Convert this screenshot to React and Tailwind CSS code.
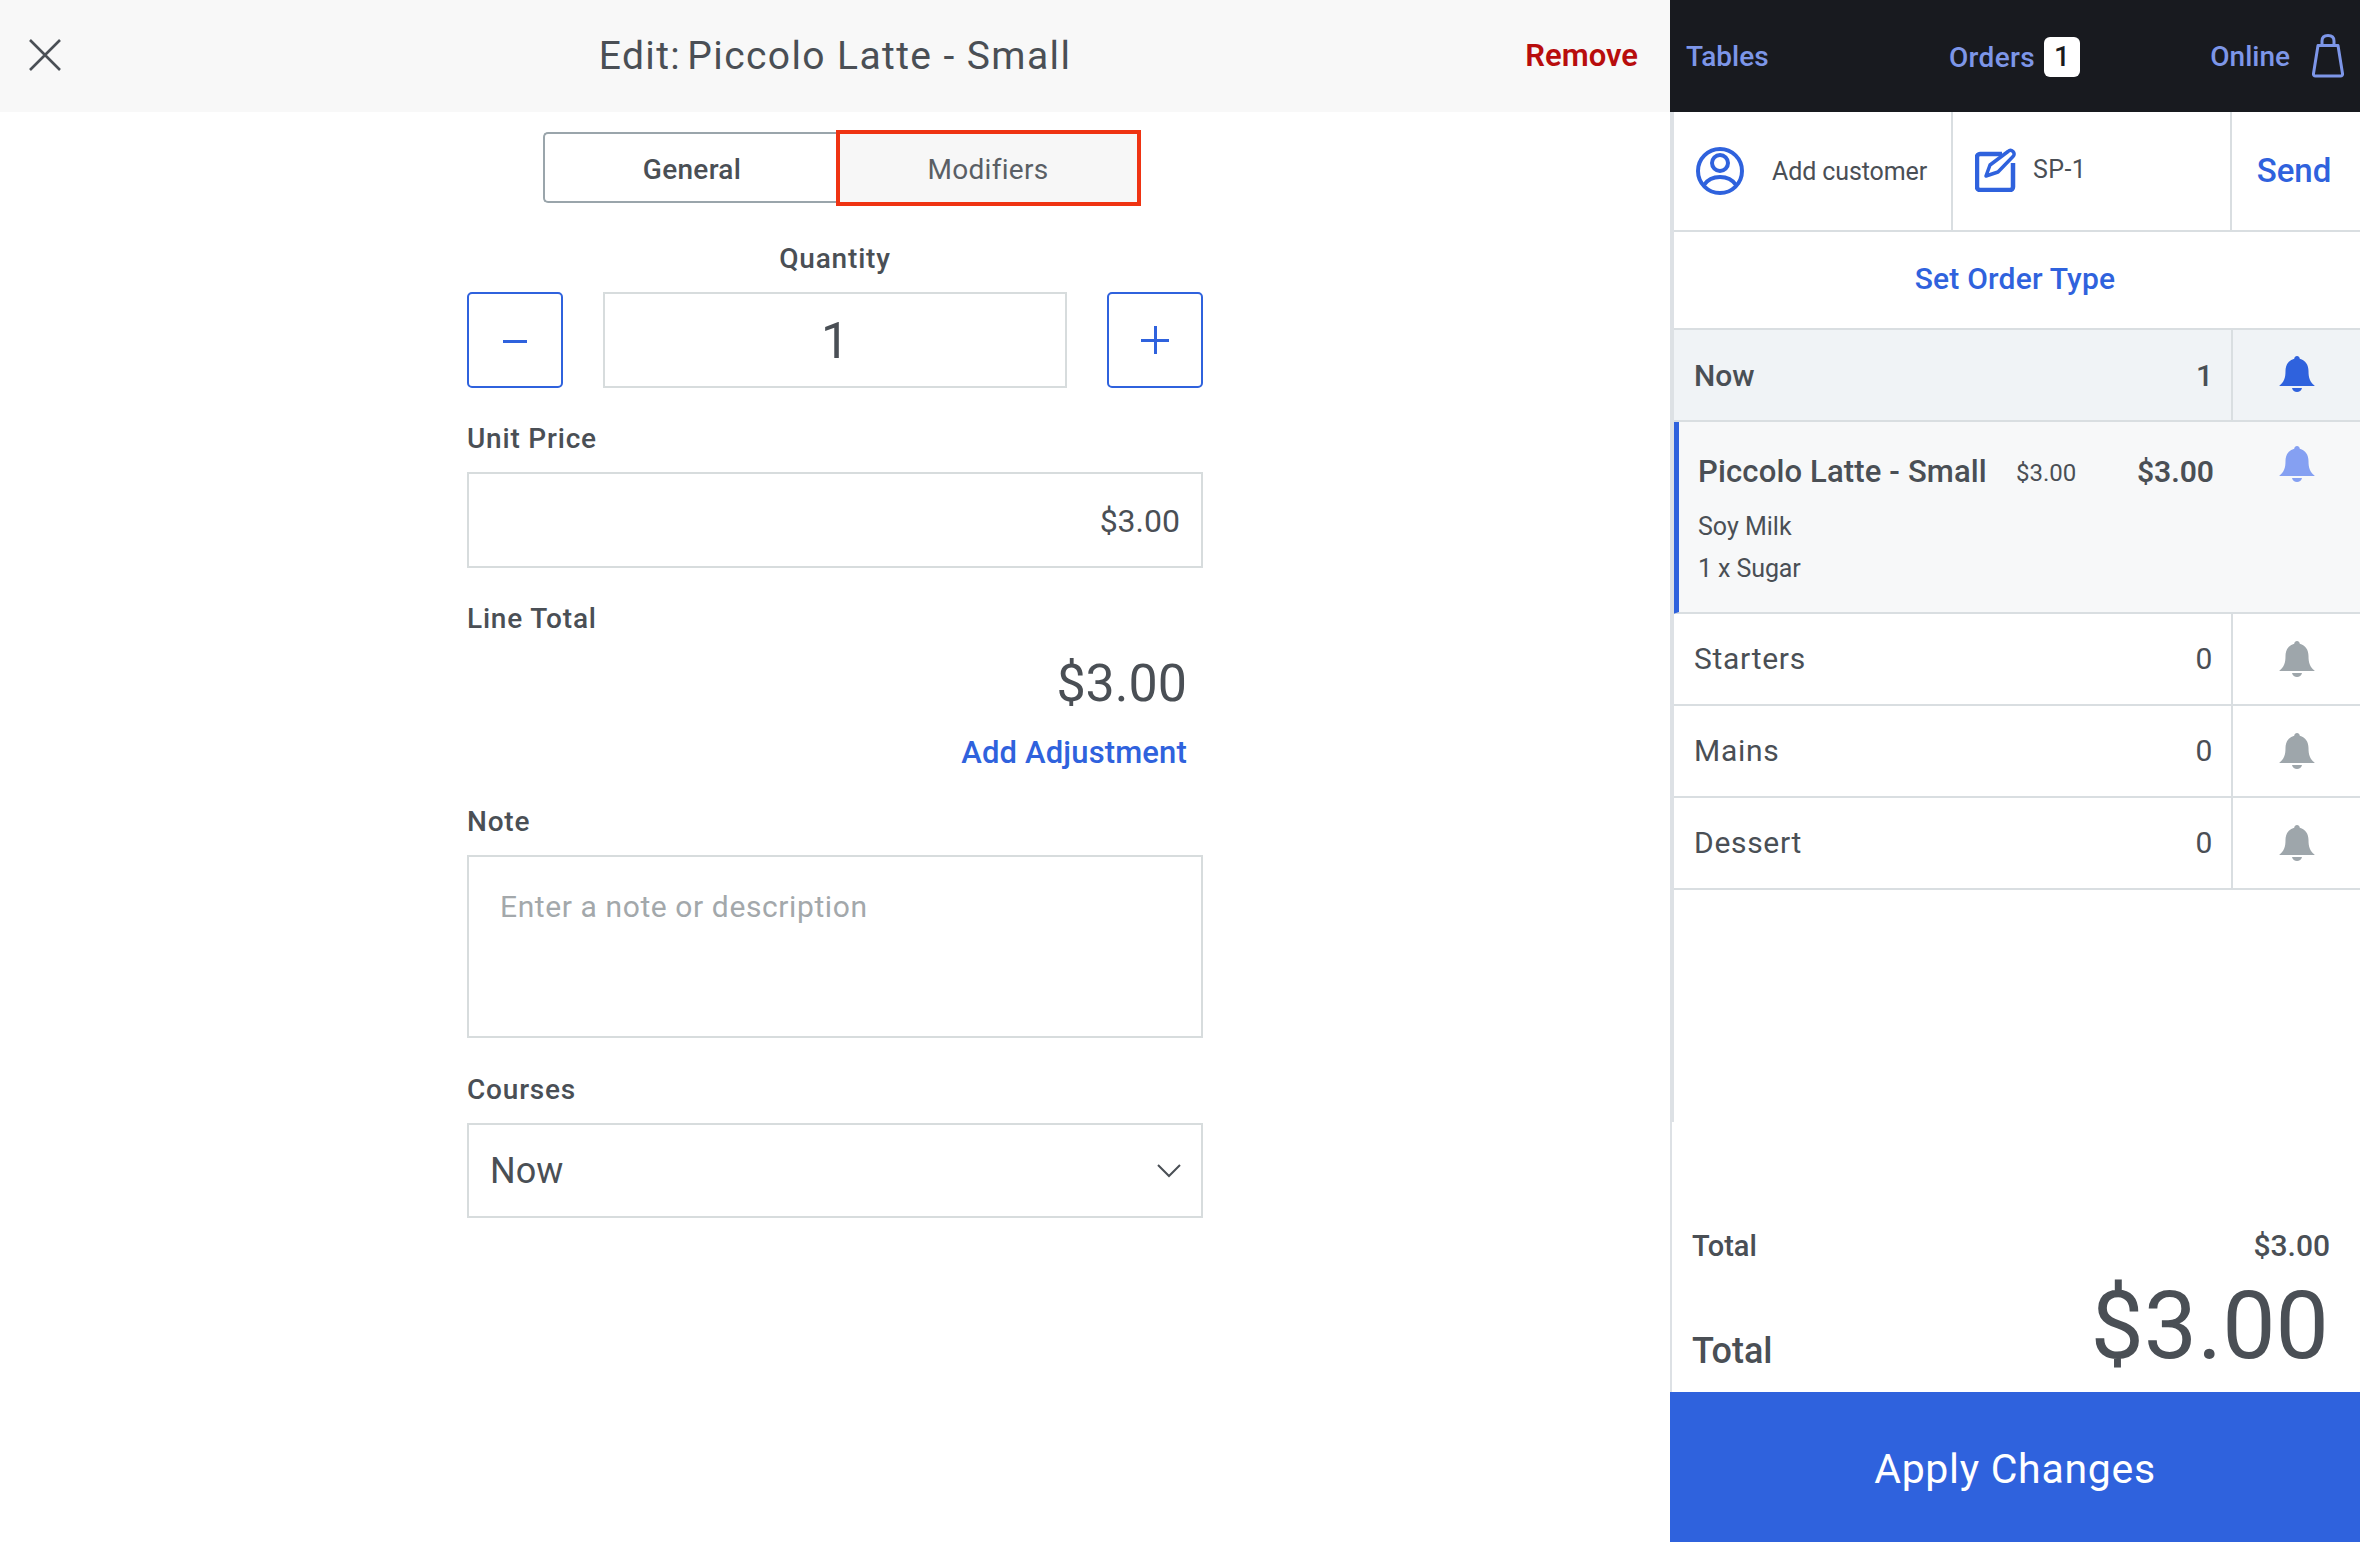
const font = { fontFamily: 'Roboto, sans-serif' }

function Bell({ className }) {
  return (
    <svg viewBox="0 0 36 36" className={className} fill="currentColor">
      <path d="M18 0c1.500 0 2.500 1 2.800 2.800C26.500 4.200 29.500 9 29.500 15c0 7 1.500 11 6 14.500V30H.5v-.5c4.500-3.500 6-7.500 6-14.500 0-6 3-10.800 8.700-12.200C15.500 1 16.500 0 18 0z" />
      <path d="M13 32h10c-.6 2.500-2.600 4-5 4s-4.400-1.500-5-4z" />
    </svg>
  )
}

function CourseRow({ name, count }) {
  return (
    <div className="flex h-[92px] border-b-2 border-[#d9dee1]">
      <div className="flex flex-1 items-center justify-between border-r-2 border-[#d9dee1] pb-[2px] pl-[21px] pr-[18px] text-[30px] tracking-[0.7px] text-[#4a4f55]">
        <span>{name}</span>
        <span>{count}</span>
      </div>
      <div className="flex w-[127px] items-center justify-center pb-[1px] text-[#9ea6ab]">
        <Bell className="h-[36px] w-[36px]" />
      </div>
    </div>
  )
}

function Label({ children }) {
  return <div className="pt-[2px] text-[28px] font-medium leading-[34px] tracking-[0.8px] text-[#4a4f55]">{children}</div>
}

export default function App() {
  return (
    <div className="flex h-[1542px] w-[2360px] overflow-hidden bg-white text-[#4a4f55]" style={font}>
      <div className="flex w-[1670px] flex-col">
        <div className="relative flex h-[112px] items-center justify-center bg-[#f8f8f8]">
          <svg viewBox="0 0 32 32" className="absolute left-[29px] top-[39px] h-[32px] w-[32px]" stroke="#4a4f55" strokeWidth="2.600" fill="none">
            <path d="M1 1l30 30M31 1L1 31" />
          </svg>
          <div className="text-[39px] tracking-[1.4px]"><span className="mr-[-5px]">Edit:</span> Piccolo Latte - Small</div>
          <div className="absolute right-[32px] top-[36px] text-[31px] font-semibold leading-[40px] text-[#b80d0d]">Remove</div>
        </div>

        <div className="mx-auto flex w-[736px] flex-col">
          <div className="ml-[9px] mt-[20px] flex h-[71px] justify-center">
            <div className="flex w-[297px] items-center justify-center rounded-l-[5px] border-2 border-r-0 border-[#9aa5ab] pt-[5px] text-[28px] font-medium tracking-[0.3px]">General</div>
            <div className="flex h-[68px] w-[297px] items-center justify-center self-center bg-[#f7f7f7] pt-[5px] text-[28px] tracking-[0.3px] text-[#5a5f65] outline-4 outline-[#ef3312]">Modifiers</div>
          </div>

          <div className="mt-[37px] text-center"><Label>Quantity</Label></div>
          <div className="mt-[16px] flex justify-between">
            <div className="flex h-[96px] w-[96px] items-center justify-center rounded-[5px] border-2 border-[#2f62dd] text-[#2f62dd]">
              <div className="mt-[3px] h-[3px] w-[24px] bg-[#2f62dd]"></div>
            </div>
            <div className="flex h-[96px] w-[464px] items-center justify-center border-2 border-[#d7dcdd] pt-[2px] text-[50px]">1</div>
            <div className="relative flex h-[96px] w-[96px] items-center justify-center rounded-[5px] border-2 border-[#2f62dd]">
              <div className="h-[3px] w-[28px] bg-[#2f62dd]"></div>
              <div className="absolute h-[28px] w-[3px] bg-[#2f62dd]"></div>
            </div>
          </div>

          <div className="mt-[32px]"><Label>Unit Price</Label></div>
          <div className="mt-[16px] flex h-[96px] items-center justify-end border-2 border-[#d7dcdd] pr-[21px] pt-[2px] text-[32px]">$3.00</div>

          <div className="mt-[32px]"><Label>Line Total</Label></div>
          <div className="mt-[16px] pr-[16px] text-right text-[52px] leading-[64px]">$3.00</div>
          <div className="mt-[17px] pr-[16px] text-right text-[31px] font-medium leading-[40px] tracking-[0.15px] text-[#2f62dd]">Add Adjustment</div>

          <div className="mt-[30px]"><Label>Note</Label></div>
          <div className="mt-[16px] h-[183px] border-2 border-[#d7dcdd] pl-[31px] pt-[32px] text-[30px] leading-[36px] tracking-[0.6px] text-[#a3a8ab]">Enter a note or description</div>

          <div className="mt-[33px]"><Label>Courses</Label></div>
          <div className="mt-[16px] flex h-[95px] items-center justify-between border-2 border-[#d7dcdd] pl-[21px] pr-[20px] pt-[1px] text-[36px]">
            <span>Now</span>
            <svg viewBox="0 0 24 14" className="h-[14px] w-[24px]" stroke="#4a4f55" strokeWidth="2" fill="none">
              <path d="M1 1l11 11L23 1" />
            </svg>
          </div>
        </div>
      </div>

      <div className="flex w-[690px] flex-col">
        <div className="flex h-[112px] items-center justify-between bg-[#181a1f] pl-[16px] pr-[16px] pt-[2px] text-[28px] font-medium text-[#7d96e8]">
          <span>Tables</span>
          <div className="ml-[50px] mt-[2px] flex items-center">
            <span className="tracking-[0.3px]">Orders</span>
            <span className="ml-[9px] mb-[3px] flex h-[40px] w-[36px] items-center justify-center rounded-[6px] bg-white text-[28px] text-[#181a1f]">1</span>
          </div>
          <div className="flex items-center">
            <span>Online</span>
            <svg viewBox="0 0 32 44" className="mb-[2px] ml-[22px] h-[44px] w-[32px]" stroke="#7d96e8" strokeWidth="3" fill="none">
              <path d="M6 11.500h20l4.500 28c.2 1.500-.5 2.500-2 2.500H3.500c-1.500 0-2.200-1-2-2.500z" strokeLinejoin="round" />
              <path d="M10 11.500V7c0-3.500 2-5.500 6-5.500s6 2 6 5.500v4.500" />
            </svg>
          </div>
        </div>

        <div className="relative flex flex-1 flex-col pl-[3px]">
          <div className="absolute bottom-0 left-0 top-0 w-[2px] bg-[#dde1e5]"></div>
          <div className="absolute left-0 top-0 h-[1010px] w-[4px] bg-[#dde1e5]"></div>

          <div className="flex h-[120px] border-b-2 border-[#d9dee1]">
            <div className="flex w-[280px] items-center border-r-2 border-[#d9dee1] pl-[23px]">
              <svg viewBox="0 0 48 48" className="h-[48px] w-[48px]" stroke="#2f62dd" strokeWidth="4" fill="none">
                <circle cx="24" cy="24" r="22" />
                <circle cx="24" cy="16" r="8" />
                <path d="M8 38c4-6 10-8 16-8s12 2 16 8" />
              </svg>
              <span className="ml-[28px] pt-[2px] text-[25px] tracking-[-0.1px]">Add customer</span>
            </div>
            <div className="flex w-[279px] items-center border-r-2 border-[#d9dee1] pb-[2px] pl-[22px]">
              <svg viewBox="0 0 42 44" className="h-[44px] w-[42px]" fill="none" stroke="#2f62dd">
                <path d="M27 6H5a3 3 0 0 0-3 3v30a3 3 0 0 0 3 3h30a3 3 0 0 0 3-3V15" strokeWidth="4.500" />
                <path d="M33 3.500c1.500-1.500 3.500-1.500 5 0s1.500 3.500 0 5L23 24l-12 4 4-11z" strokeWidth="3.500" strokeLinejoin="round" />
              </svg>
              <span className="ml-[16px] text-[25px] tracking-[0.4px]">SP-1</span>
            </div>
            <div className="flex flex-1 items-center justify-center pr-[4px] text-[33px] font-medium text-[#2f62dd]">Send</div>
          </div>

          <div className="flex h-[98px] items-center justify-center border-b-2 border-[#d9dee1] pb-[3px] pr-[3px] text-[30px] font-medium tracking-[0.2px] text-[#2f62dd]">Set Order Type</div>

          <div className="flex h-[92px] border-b-2 border-[#d9dee1] bg-[#f0f3f6]">
            <div className="flex flex-1 items-center justify-between border-r-2 border-[#d9dee1] pl-[21px] pr-[18px] text-[30px] font-medium">
              <span>Now</span>
              <span>1</span>
            </div>
            <div className="flex w-[127px] items-center justify-center pb-[2px] text-[#2f62dd]">
              <Bell className="h-[36px] w-[36px]" />
            </div>
          </div>

          <div className="flex h-[192px] border-b-2 border-[#d9dee1] border-l-[6px] border-l-[#2f62dd] bg-[#f7f8f9]">
            <div className="flex-1 pl-[19px] pt-[27px]">
              <div className="flex items-center pr-[19px]">
                <span className="text-[31px] font-medium leading-[40px] tracking-[0.15px]">Piccolo Latte - Small</span>
                <span className="ml-[29px] mt-[3px] text-[24px]">$3.00</span>
                <span className="ml-auto text-[30px] font-semibold">$3.00</span>
              </div>
              <div className="mt-[19px] text-[25px] leading-[28px]">Soy Milk</div>
              <div className="mt-[14px] text-[25px] leading-[28px] tracking-[-0.1px]">1 x Sugar</div>
            </div>
            <div className="flex w-[127px] justify-center pt-[24px] text-[#85a0f2]">
              <Bell className="h-[36px] w-[36px]" />
            </div>
          </div>

          <CourseRow name="Starters" count="0" />
          <CourseRow name="Mains" count="0" />
          <CourseRow name="Dessert" count="0" />

          <div className="mt-auto px-[19px]">
            <div className="mb-[12px] flex items-center justify-between pr-[11px] font-medium leading-[36px]">
              <span className="text-[29px]">Total</span>
              <span className="text-[30px]">$3.00</span>
            </div>
            <div className="flex items-end justify-between pb-[16px] pr-[12px]">
              <span className="mb-[3px] text-[36px] font-medium leading-[44px]">Total</span>
              <span className="text-[95px] leading-[100px]">$3.00</span>
            </div>
          </div>
        </div>

        <div className="flex h-[150px] items-center justify-center bg-[#2f62dd] pt-[5px] text-[41px] tracking-[0.7px] text-white">Apply Changes</div>
      </div>
    </div>
  )
}
